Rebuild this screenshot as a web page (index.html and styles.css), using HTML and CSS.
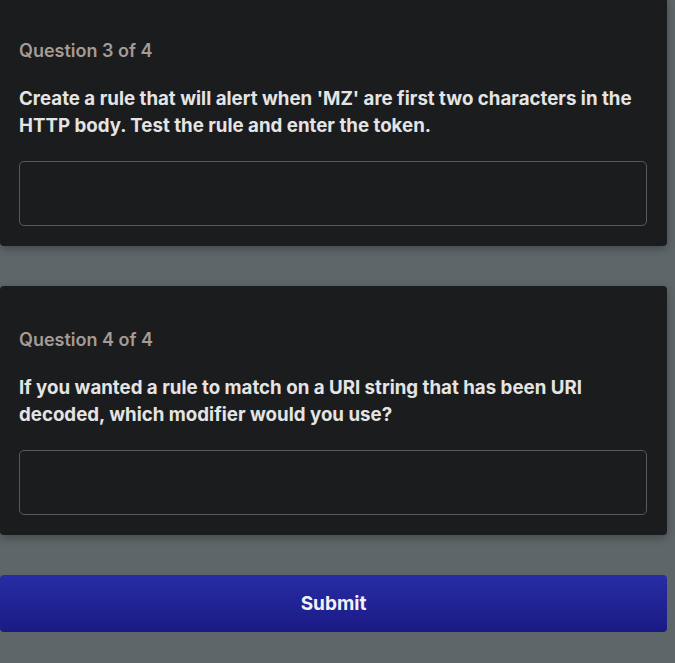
FILE: index.html
```html
<!DOCTYPE html>
<html lang="en">
<head>
<meta charset="utf-8">
<link rel="stylesheet" href="styles.css">
</head>
<body>
<main class="wrap">
  <section class="card">
    <div class="label">Question 3 of 4</div>
    <p class="question">Create a rule that will alert when 'MZ' are first two characters in the HTTP body. Test the rule and enter the token.</p>
    <input class="answer" type="text">
  </section>
  <section class="card">
    <div class="label">Question 4 of 4</div>
    <p class="question">If you wanted a rule to match on a URI string that has been URI decoded, which modifier would you use?</p>
    <input class="answer" type="text">
  </section>
  <button class="submit" type="button">Submit</button>
</main>
</body>
</html>
```
FILE: styles.css
```css
html, body {
  margin: 0;
  padding: 0;
  background: #5e6669;
  font-family: Inter, "Noto Sans", sans-serif;
}
.wrap {
  width: 667px;
  margin-top: -3px;
  display: flex;
  flex-direction: column;
  gap: 40px;
}
.card {
  background: #1b1c1e;
  border-radius: 4px;
  padding: 42px 20px 20px 19px;
  box-shadow: 0 3px 8px rgba(0, 0, 0, 0.28);
}
.label {
  font-size: 18px;
  font-weight: 600;
  line-height: 24px;
  color: #a39b94;
}
.question {
  margin: 22px 0 0;
  font-size: 18.7px;
  font-weight: 700;
  line-height: 27px;
  color: #e4e4e4;
}
.answer {
  display: block;
  box-sizing: border-box;
  width: 100%;
  height: 65px;
  margin-top: 22px;
  background: transparent;
  border: 1px solid #58595b;
  border-radius: 5px;
  outline: none;
  color: #e4e4e4;
  font: inherit;
}
.submit {
  height: 57px;
  border: none;
  border-radius: 4px;
  background: linear-gradient(to bottom, #262da4, #1b1a85);
  color: #f2f2f2;
  font-family: Inter, "Noto Sans", sans-serif;
  font-size: 19px;
  font-weight: 700;
  cursor: pointer;
}
```
